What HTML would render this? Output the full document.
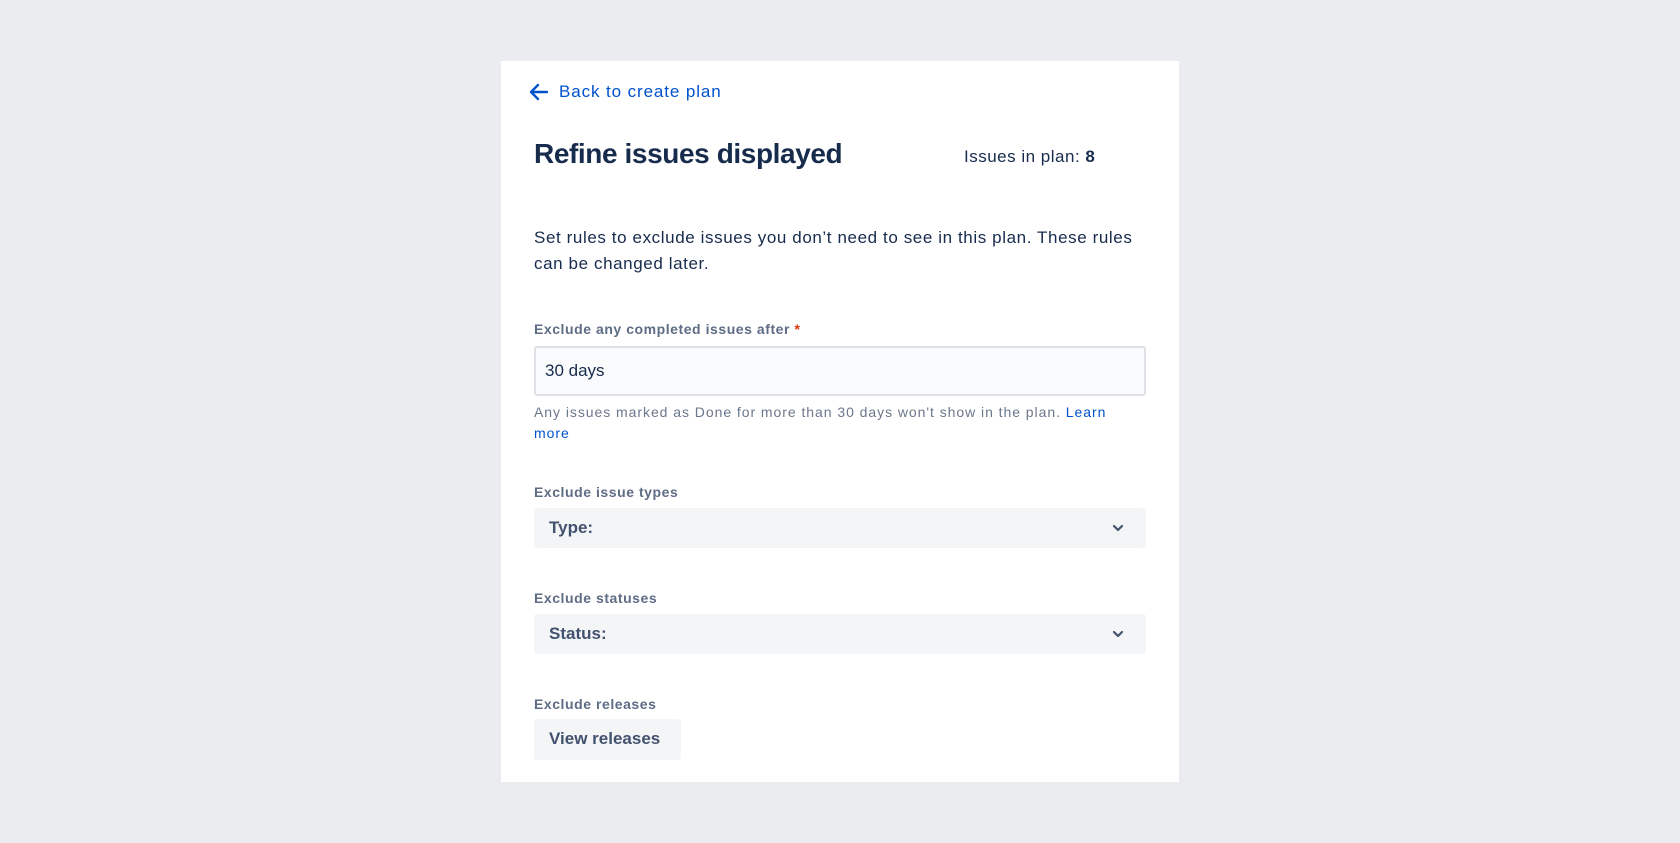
<!DOCTYPE html>
<html><head><meta charset="utf-8"><style>
*{box-sizing:border-box;margin:0;padding:0}
body{width:1680px;height:843px;background:#ebecf0;font-family:"Liberation Sans",sans-serif;position:relative;overflow:hidden;color:#172b4d}
.card{position:absolute;left:501px;top:61px;width:678px;height:721px;background:#fff}
.a{position:absolute;white-space:nowrap}
.lbl{font-size:14px;font-weight:bold;color:#5e6c84;letter-spacing:0.55px}
.sel{position:absolute;left:33px;width:612px;height:40px;background:#f4f5f7;border-radius:3px;font-size:17px;font-weight:bold;color:#42526e;padding:10px 15px;}
.chev{position:absolute;right:22px;top:15px}
</style></head><body>
<div class="card">
 <svg class="a" style="left:28px;top:22px" width="20" height="18" viewBox="0 0 20 18"><path d="M18 9H3M9 2L2 9l7 7" fill="none" stroke="#0052cc" stroke-width="2.4" stroke-linecap="round" stroke-linejoin="round"/></svg>
 <div class="a" style="left:58px;top:21px;font-size:17px;color:#0052cc;letter-spacing:0.9px">Back to create plan</div>
 <div class="a" style="left:33px;top:77px;font-size:28px;font-weight:bold;color:#172b4d;letter-spacing:-0.4px">Refine issues displayed</div>
 <div class="a" style="left:463px;top:86px;font-size:17px;color:#172b4d;letter-spacing:0.5px">Issues in plan: <b>8</b></div>
 <div class="a" style="left:33px;top:164px;font-size:17px;line-height:26px;color:#172b4d;white-space:normal;width:620px;letter-spacing:0.6px">Set rules to exclude issues you don’t need to see in this plan. These rules can be changed later.</div>
 <div class="a lbl" style="left:33px;top:260px">Exclude any completed issues after<span style="color:#de350b"> *</span></div>
 <div class="a" style="left:33px;top:285px;width:612px;height:50px;border:2px solid #dfe1e6;border-radius:3px;background:#fafbfc;font-size:17px;padding:13px 9px;color:#172b4d">30 days</div>
 <div class="a" style="left:33px;top:341px;width:590px;white-space:normal;font-size:14px;line-height:21px;color:#6b778c;letter-spacing:0.95px">Any issues marked as Done for more than 30 days won't show in the plan. <span style="color:#0052cc">Learn more</span></div>
 <div class="a lbl" style="left:33px;top:423px">Exclude issue types</div>
 <div class="sel" style="top:447px">Type:<svg class="chev" width="12" height="10" viewBox="0 0 12 10"><path d="M2 3l4 4 4-4" fill="none" stroke="#42526e" stroke-width="2.2" stroke-linecap="round" stroke-linejoin="round"/></svg></div>
 <div class="a lbl" style="left:33px;top:529px">Exclude statuses</div>
 <div class="sel" style="top:553px">Status:<svg class="chev" width="12" height="10" viewBox="0 0 12 10"><path d="M2 3l4 4 4-4" fill="none" stroke="#42526e" stroke-width="2.2" stroke-linecap="round" stroke-linejoin="round"/></svg></div>
 <div class="a lbl" style="left:33px;top:635px">Exclude releases</div>
 <div class="sel" style="top:658px;width:147px;height:41px">View releases</div>
</div>
</body></html>
